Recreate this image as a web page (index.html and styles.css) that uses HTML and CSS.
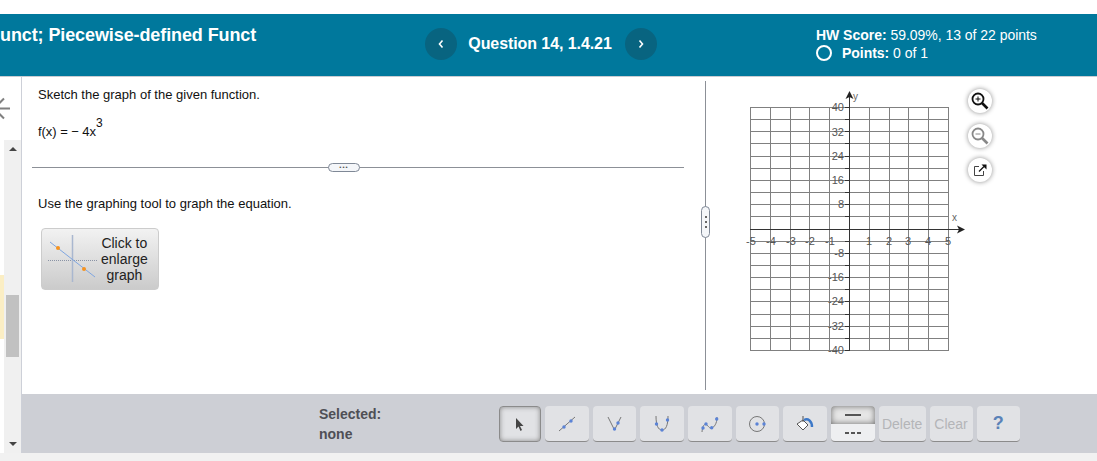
FILE: index.html
```html
<!DOCTYPE html>
<html lang="en">
<head>
  <meta charset="UTF-8"/>
  <title>Homework Question</title>
  <link rel="stylesheet" href="styles.css">
</head>
<body>

  <!-- Teal question header -->
  <header class="topbar">
    <div class="hw-title">unct; Piecewise-defined Funct</div>
    <nav class="question-nav">
      <button class="nav-btn" aria-label="Previous"><svg width="8" height="10" viewBox="0 0 8 10"><path d="M5.500 1.500 2.500 5l3 3.500" fill="none" stroke="#fff" stroke-width="1.600"/></svg></button>
      <span class="question-name">Question 14, 1.4.21</span>
      <button class="nav-btn" aria-label="Next"><svg width="8" height="10" viewBox="0 0 8 10"><path d="M2.500 1.500 5.500 5l-3 3.500" fill="none" stroke="#fff" stroke-width="1.600"/></svg></button>
    </nav>
    <div class="score">
      <div><b>HW Score:</b> 59.09%, 13 of 22 points</div>
      <div class="score-points"><i class="ring"></i><span><b>Points:</b> 0 of 1</span></div>
    </div>
  </header>

  <div class="workspace">
    <!-- Left rail with cut off arrow and scrollbar -->
    <aside class="rail">
      <div class="rail-top">
        <svg width="10" height="24" viewBox="0 0 10 24"><path d="M0 11.500H10M4 1.500-6 11.500l10 10" fill="none" stroke="#808080" stroke-width="2"/></svg>
      </div>
      <div class="rail-bottom">
        <div class="rail-mark"></div>
        <div class="scroll-track">
          <i class="arrow-up"></i>
          <div class="scroll-thumb"></div>
          <i class="arrow-down"></i>
        </div>
      </div>
    </aside>

    <div class="question">
      <div class="panes">
        <section class="left-pane">
          <p class="prompt">Sketch the graph of the given function.</p>
          <p class="formula">f(x) = &minus; 4x<sup>3</sup></p>
          <div class="rule"><span class="rule-handle">&bull;&bull;&bull;</span></div>
          <p class="prompt">Use the graphing tool to graph the equation.</p>
          <button class="enlarge">
            <svg width="54" height="48" viewBox="0 0 54 48">
              <path d="M0 25.500H49" stroke="#8a93a5" stroke-width="1" stroke-dasharray="1 1" fill="none"/>
              <path d="M24.500 0V47" stroke="#a9b7cf" stroke-width="1.500" fill="none"/>
              <path d="M2 7 47 42" stroke="#7fa6e0" stroke-width="1" fill="none"/>
              <circle cx="10" cy="13" r="2" fill="#f7931e"/>
              <circle cx="36" cy="34" r="2" fill="#f7931e"/>
            </svg>
            <span>Click to<br>enlarge<br>graph</span>
          </button>
        </section>

        <div class="divider"><span class="divider-handle"><i></i><i></i><i></i></span></div>

        <section class="right-pane">
          <!-- viewBox is in page coordinates -->
          <svg class="graph" width="230" height="275" viewBox="740 85 230 275">
            <path class="grid" d="M750.500 107V350M770.500 107V350M790.500 107V350M809.500 107V350M829.500 107V350M869.500 107V350M889.500 107V350M908.500 107V350M928.500 107V350M948.500 107V350
              M750 107.500H949M750 119.500H949M750 131.500H949M750 143.500H949M750 156.500H949M750 168.500H949M750 180.500H949M750 192.500H949M750 204.500H949M750 216.500H949
              M750 241.500H949M750 253.500H949M750 265.500H949M750 277.500H949M750 289.500H949M750 301.500H949M750 314.500H949M750 326.500H949M750 338.500H949M750 350.500H949"/>
            <path class="axis" d="M849.500 92V350M750 229.500H962"/>
            <path class="arrow" d="M849.500 91 853.500 99 849.500 97 845.500 99ZM965 229.500 957 225.500 959 229.500 957 233.500Z"/>
            <path class="ticks" d="M845 107.500H850M845 119.500H850M845 131.500H850M845 143.500H850M845 156.500H850M845 168.500H850M845 180.500H850M845 192.500H850M845 204.500H850M845 216.500H850M845 241.500H850M845 253.500H850M845 265.500H850M845 277.500H850M845 289.500H850M845 301.500H850M845 314.500H850M845 326.500H850M845 338.500H850M845 350.500H850"/>
            <g class="y-labels">
              <text x="844" y="111">40</text><text x="844" y="136">32</text><text x="844" y="160">24</text><text x="844" y="184">16</text><text x="844" y="208">8</text>
              <text x="844" y="257">-8</text><text x="844" y="281">-16</text><text x="844" y="305">-24</text><text x="844" y="330">-32</text><text x="844" y="354">-40</text>
            </g>
            <g class="x-labels">
              <text x="751" y="245">-5</text><text x="771" y="245">-4</text><text x="791" y="245">-3</text><text x="810" y="245">-2</text><text x="830" y="245">-1</text>
              <text x="869" y="245">1</text><text x="889" y="245">2</text><text x="908" y="245">3</text><text x="928" y="245">4</text><text x="948" y="245">5</text>
            </g>
            <text class="axis-name" x="853" y="100">y</text>
            <text class="axis-name" x="952" y="221">x</text>
          </svg>
          <div class="zoom-tools">
            <button class="round-btn" aria-label="Zoom in"><svg width="20" height="20" viewBox="0 0 20 20"><circle cx="8" cy="8" r="5.500" fill="none" stroke="#111" stroke-width="1.800"/><path d="M5.500 8h5M8 5.500v5" stroke="#111" stroke-width="1"/><path d="m12 12 5.500 5.500" stroke="#111" stroke-width="2.600"/></svg></button>
            <button class="round-btn" aria-label="Zoom out"><svg width="20" height="20" viewBox="0 0 20 20"><circle cx="8" cy="8" r="5.500" fill="none" stroke="#888" stroke-width="1.800"/><path d="M5.500 8h5" stroke="#888" stroke-width="1"/><path d="m12 12 5.500 5.500" stroke="#888" stroke-width="2.600"/></svg></button>
            <button class="round-btn" aria-label="Open in new window"><svg width="14" height="14" viewBox="0 0 14 14"><path d="M6 3.500H1.500v9h9V8" fill="none" stroke="#444" stroke-width="1"/><path d="m6 8.500 5-5" stroke="#111" stroke-width="1.200"/><path d="M8.500 1.500h5V6.500Z" fill="#111"/></svg></button>
          </div>
        </section>
      </div>

      <!-- Graph tools -->
      <div class="toolbar">
        <div class="selected"><b>Selected:</b><b>none</b></div>
        <div class="tools">
          <button class="tool tool-on"><svg width="14" height="16" viewBox="0 0 14 16"><path d="M3 2v11l2.500-2.500 2 4.500 1.500-1-2-4h3.500Z" fill="#444"/></svg></button>
          <button class="tool"><svg width="20" height="18" viewBox="0 0 20 18"><path d="M2 16 18 2" stroke="#777" fill="none"/><circle cx="7" cy="12" r="1.700" fill="#5b83d6"/><circle cx="14" cy="6" r="1.700" fill="#5b83d6"/></svg></button>
          <button class="tool"><svg width="16" height="16" viewBox="0 0 16 16"><path d="M1 1 7.500 14 14 1" stroke="#777" fill="none"/><circle cx="7.500" cy="13" r="1.700" fill="#5b83d6"/><circle cx="11" cy="7" r="1.700" fill="#5b83d6"/></svg></button>
          <button class="tool"><svg width="16" height="18" viewBox="0 0 16 18"><path d="M2 1C2 10 4 15 8 15S14 10 14 1" stroke="#777" fill="none"/><circle cx="2.500" cy="9" r="1.700" fill="#5b83d6"/><circle cx="8" cy="15" r="1.700" fill="#5b83d6"/><circle cx="13.500" cy="5" r="1.700" fill="#5b83d6"/></svg></button>
          <button class="tool"><svg width="18" height="18" viewBox="0 0 18 18"><path d="M1 17C1.500 10 4 8 6 10S9 14 11 13 16 9 16 2" stroke="#777" fill="none"/><circle cx="2" cy="13" r="1.700" fill="#5b83d6"/><circle cx="5" cy="9" r="1.700" fill="#5b83d6"/><circle cx="10.700" cy="12.700" r="1.700" fill="#5b83d6"/><circle cx="15.700" cy="4" r="1.700" fill="#5b83d6"/></svg></button>
          <button class="tool"><svg width="18" height="18" viewBox="0 0 18 18"><circle cx="8" cy="9" r="7.500" stroke="#777" fill="none"/><circle cx="8" cy="9" r="1.700" fill="#5b83d6"/><circle cx="15" cy="9" r="1.700" fill="#5b83d6"/></svg></button>
          <button class="tool"><svg width="18" height="16" viewBox="0 0 18 16"><path d="M1 8 7 4l5 5-5 5Z" fill="#fff" stroke="#555"/><path d="M7 0v6" stroke="#555"/><path d="M8 4c4-2 8 1 8 7" stroke="#3c78c8" stroke-width="2.400" fill="none"/></svg></button>
          <div class="line-style">
            <span class="line-solid"><i></i></span>
            <span class="line-dashed"><i></i><i></i><i></i></span>
          </div>
          <button class="tool tool-text tool-delete">Delete</button>
          <button class="tool tool-text">Clear</button>
          <button class="tool tool-help">?</button>
        </div>
      </div>
    </div>
  </div>

  <div class="footer-strip"></div>

</body>
</html>
```

FILE: styles.css
```css
* {
  box-sizing: border-box;
}

html, body {
  height: 100%;
}

body {
  margin: 0;
  padding-top: 14px;
  display: flex;
  flex-direction: column;
  overflow: hidden;
  font-family: "Liberation Sans", Arial, sans-serif;
  background-color: #fff;
}

button {
  font-family: inherit;
  padding: 0;
}

/* Header */
.topbar {
  height: 63px;
  flex: none;
  display: flex;
  align-items: flex-start;
  background-color: #00789c;
  border-bottom: 1px solid #c9ccd2;
  color: #fff;
}

.hw-title {
  width: 257px;
  margin-top: 11px;
  white-space: nowrap;
  font-size: 18px;
  font-weight: bold;
  letter-spacing: -0.1px;
}

.question-nav {
  width: 232px;
  margin: 14px 0 0 168px;
  display: flex;
  align-items: center;
  justify-content: space-between;
}

.nav-btn {
  width: 32px;
  height: 32px;
  display: flex;
  align-items: center;
  justify-content: center;
  border: none;
  border-radius: 50%;
  background-color: #086480;
}

.question-name {
  margin-right: 2px;
  font-size: 16px;
  font-weight: bold;
  letter-spacing: -0.08px;
}

.score {
  margin: 12px 0 0 159px;
  font-size: 14px;
  line-height: 18px;
  letter-spacing: -0.03px;
}

.score-points {
  display: flex;
  align-items: center;
  gap: 10px;
}

.ring {
  width: 16px;
  height: 16px;
  border: 2px solid #fff;
  border-radius: 50%;
}

/* Main area */
.workspace {
  flex-grow: 1;
  display: flex;
  min-height: 0;
}

.rail {
  width: 22px;
  flex: none;
  display: flex;
  flex-direction: column;
  border-right: 1px solid #cdd0d8;
}

.rail-top {
  height: 63px;
  padding-top: 20px;
  line-height: 0;
}

.rail-bottom {
  flex-grow: 1;
  display: flex;
}

.rail-mark {
  width: 4px;
  height: 64px;
  margin-top: 135px;
  background-color: #fbeec4;
}

.scroll-track {
  flex-grow: 1;
  display: flex;
  flex-direction: column;
  align-items: center;
  background-color: #f0f0f0;
}

.arrow-up {
  margin-top: 7px;
  border: 4px solid transparent;
  border-top: none;
  border-bottom: 4px solid #444;
}

.scroll-thumb {
  width: 13px;
  height: 62px;
  margin-top: 144px;
  background-color: #c1c1c1;
}

.arrow-down {
  margin-top: auto;
  margin-bottom: 7px;
  border: 4px solid transparent;
  border-bottom: none;
  border-top: 4px solid #444;
}

.question {
  flex-grow: 1;
  display: flex;
  flex-direction: column;
  min-width: 0;
}

.panes {
  height: 317px;
  flex: none;
  display: flex;
}

.left-pane {
  width: 683px;
  flex: none;
  padding: 10px 0 0 10px;
}

.prompt {
  margin: 0 0 0 6px;
  font-size: 13px;
  line-height: 15px;
  color: #111;
}

.formula {
  margin: 20px 0 0 6px;
  font-size: 13px;
  line-height: 20px;
  letter-spacing: -0.05px;
  color: #111;
}

.formula sup {
  font-size: 12px;
  line-height: 0;
  vertical-align: 9px;
}

.rule {
  position: relative;
  height: 1px;
  margin: 25px 21px 28px 0;
  background-color: #8c9097;
}

.rule-handle {
  position: absolute;
  left: 296px;
  top: -4px;
  width: 32px;
  height: 9px;
  border: 1px solid #7f8896;
  border-radius: 5px;
  background-color: #f4f6f9;
  font-size: 6px;
  line-height: 7px;
  text-align: center;
  letter-spacing: 1px;
  color: #555;
}

.enlarge {
  width: 118px;
  height: 62px;
  margin: 17px 0 0 9px;
  display: flex;
  align-items: center;
  padding: 0 0 0 6px;
  border: 1px solid #ccc;
  border-radius: 4px;
  background: linear-gradient(#f2f2f2, #cbcbcb);
  font-size: 14px;
  line-height: 16px;
  color: #222;
}

.enlarge span {
  margin-left: -1px;
}

.divider {
  position: relative;
  width: 1px;
  flex: none;
  margin: 4px 0;
  background-color: #8c9097;
}

.divider-handle {
  position: absolute;
  left: -4px;
  top: 125px;
  width: 9px;
  height: 32px;
  display: flex;
  flex-direction: column;
  align-items: center;
  justify-content: center;
  gap: 3px;
  border: 1px solid #7f8896;
  border-radius: 5px;
  background-color: #f4f6f9;
}

.divider-handle i {
  width: 2px;
  height: 2px;
  background-color: #666;
}

.right-pane {
  flex-grow: 1;
  display: flex;
  align-items: flex-start;
  padding: 8px 0 0 34px;
}

.graph {
  flex: none;
}

.grid {
  fill: none;
  stroke: #808080;
  stroke-width: 1;
}

.axis {
  fill: none;
  stroke: #333;
  stroke-width: 1;
}

.ticks {
  fill: none;
  stroke: #333;
}

.arrow {
  fill: #222;
}

.y-labels text {
  font-size: 11px;
  fill: #555;
  text-anchor: end;
}

.x-labels text {
  font-size: 11px;
  fill: #555;
  text-anchor: middle;
}

.axis-name {
  font-size: 10px;
  fill: #666;
}

.zoom-tools {
  margin: 4px 0 0 -2px;
  display: flex;
  flex-direction: column;
  gap: 10.5px;
}

.round-btn {
  width: 24px;
  height: 24px;
  display: flex;
  align-items: center;
  justify-content: center;
  border: none;
  border-radius: 50%;
  background-color: #fff;
  box-shadow: 0 0 5px rgba(0, 0, 0, 0.45);
}

/* Toolbar */
.toolbar {
  flex-grow: 1;
  display: flex;
  background-color: #cdcfd5;
}

.selected {
  width: 178px;
  margin: 13px 0 0 297px;
  display: flex;
  flex-direction: column;
  gap: 6px;
  font-size: 14px;
  line-height: 14px;
  color: #4f4f55;
}

.tools {
  margin: 12px 0 0 2px;
  display: flex;
  gap: 4px;
  align-items: flex-start;
}

.tool {
  width: 43.7px;
  height: 36px;
  display: flex;
  align-items: center;
  justify-content: center;
  border: none;
  border-bottom: 1px solid #8b8b8b;
  border-radius: 4px;
  background-color: #e1e2e5;
}

.tool-on {
  width: 42px;
  border: 1px solid #8b8b8b;
  background-color: #e1e2e5;
  box-shadow: inset 0 0 5px #8a8a8a;
}

.tool-text {
  width: 43px;
  font-size: 14px;
  color: #b4b5b8;
}

.tool-delete {
  width: 46.7px;
}

.tool-help {
  font-size: 18px;
  font-weight: bold;
  color: #5a82b8;
}

.line-style {
  width: 43.7px;
  height: 36px;
  display: flex;
  flex-direction: column;
  border-bottom: 1px solid #8b8b8b;
  border-radius: 4px;
  overflow: hidden;
  background-color: #eeeff1;
}

.line-solid {
  height: 18px;
  display: flex;
  align-items: center;
  justify-content: center;
  background-color: #e6e6e6;
  box-shadow: inset 0 0 6px #666;
}

.line-solid i {
  width: 16px;
  height: 2px;
  background-color: #555;
}

.line-dashed {
  flex-grow: 1;
  display: flex;
  align-items: center;
  justify-content: center;
  gap: 2px;
}

.line-dashed i {
  width: 4px;
  height: 2px;
  background-color: #555;
}

.footer-strip {
  height: 8px;
  flex: none;
  background-color: #f1f1f1;
}
```
